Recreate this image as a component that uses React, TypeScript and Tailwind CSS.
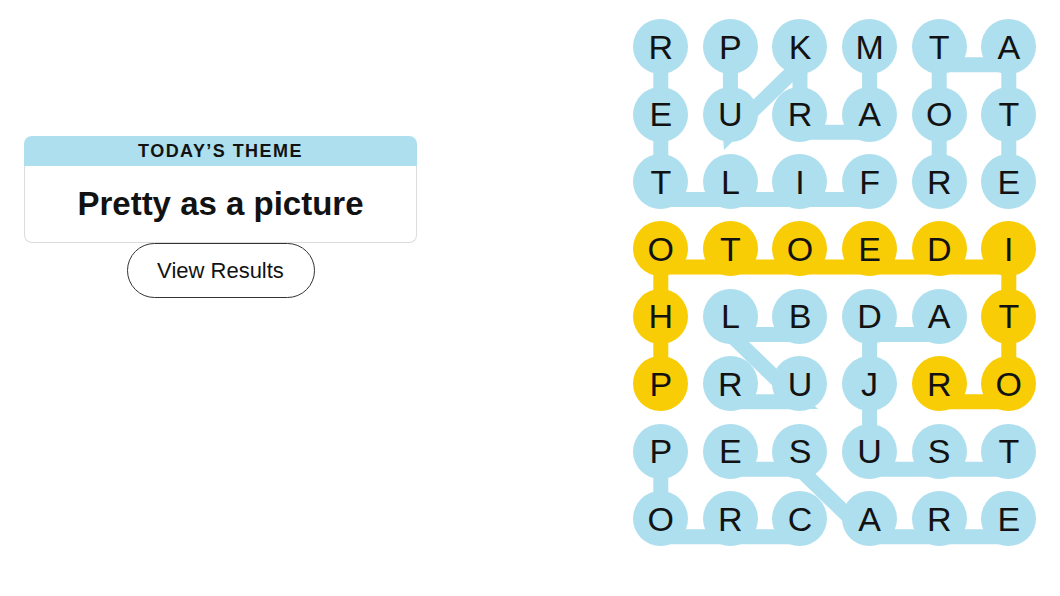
const ROWS = ['RPKMTA', 'EURAOT', 'TLIFRE', 'OTOEDI', 'HLBDAT', 'PRUJRO', 'PESUST', 'ORCARE']

const BLUE = '#aedfee'
const GOLD = '#f8cd05'

// spangram cells
const gold = new Set(['3,0', '3,1', '3,2', '3,3', '3,4', '3,5', '4,0', '4,5', '5,0', '5,4', '5,5'])

type P = [number, number]

const words: { color: string; path: P[] }[] = [
  { color: BLUE, path: [[2, 3], [2, 2], [2, 1], [2, 0], [1, 0], [0, 0]] },
  { color: BLUE, path: [[0, 3], [1, 3], [1, 2], [0, 2], [1, 1], [0, 1]] },
  { color: BLUE, path: [[2, 4], [1, 4], [0, 4], [0, 5], [1, 5], [2, 5]] },
  { color: BLUE, path: [[4, 2], [4, 1], [5, 2], [5, 1]] },
  { color: BLUE, path: [[4, 4], [4, 3], [5, 3], [6, 3], [6, 4], [6, 5]] },
  { color: BLUE, path: [[7, 2], [7, 1], [7, 0], [6, 0]] },
  { color: BLUE, path: [[7, 5], [7, 4], [7, 3], [6, 2], [6, 1]] },
  { color: GOLD, path: [[5, 0], [4, 0], [3, 0], [3, 1], [3, 2], [3, 3], [3, 4], [3, 5], [4, 5], [5, 5], [5, 4]] },
]

const COL = 69.6
const ROW = 67.43
const cx = (c: number) => COL / 2 + COL * c
const cy = (r: number) => ROW / 2 + ROW * r + 18

function Board() {
  return (
    <div className="relative w-[417.6px] h-[539.44px]">
      <svg className="absolute inset-0" width="418" height="540" viewBox="0 0 418 540">
        {words.map((w, i) =>
          w.path.slice(1).map((p, j) => {
            const a = w.path[j]
            return (
              <line
                key={`${i}-${j}`}
                x1={cx(a[1])}
                y1={cy(a[0])}
                x2={cx(p[1])}
                y2={cy(p[0])}
                stroke={w.color}
                strokeWidth={15}
              />
            )
          })
        )}
        <polygon points="97,125 110,125 98,137" fill={BLUE} />
        <polygon points="178,383 192,396 174,396" fill={BLUE} />
      </svg>
      <div className="relative grid grid-cols-[repeat(6,69.6px)] grid-rows-[repeat(8,67.43px)]">
        {ROWS.map((row, r) =>
          row.split('').map((ch, c) => (
            <div key={`${r}-${c}`} className="flex items-center justify-center">
              <div
                className={
                  'flex h-[55px] w-[55px] items-center justify-center rounded-full text-[34px] leading-none ' +
                  (gold.has(`${r},${c}`) ? 'bg-[#f8cd05]' : 'bg-[#aedfee]')
                }
              >
                {ch}
              </div>
            </div>
          ))
        )}
      </div>
    </div>
  )
}

export default function App() {
  return (
    <div className="flex h-[596px] w-[1060px] bg-white font-['Liberation_Sans',Arial,sans-serif] text-[#121212]">
      <div className="w-[626px] shrink-0 pl-[24px] pt-[136px]">
        <div className="w-[393px]">
          <div className="flex h-[30px] items-center justify-center rounded-t-[8px] bg-[#aedfee] text-[18px] font-bold tracking-[0.08em]">
            TODAY’S THEME
          </div>
          <div className="flex h-[77px] items-center justify-center rounded-b-[8px] border-x border-b border-[#dcdcdc] text-[33px] font-bold">
            Pretty as a picture
          </div>
        </div>
        <div className="flex w-[393px] justify-center">
          <button className="h-[55px] w-[188px] rounded-full border border-[#333] bg-white text-[22px]">
            View Results
          </button>
        </div>
      </div>
      <div className="pt-[13px]">
        <Board />
      </div>
    </div>
  )
}
